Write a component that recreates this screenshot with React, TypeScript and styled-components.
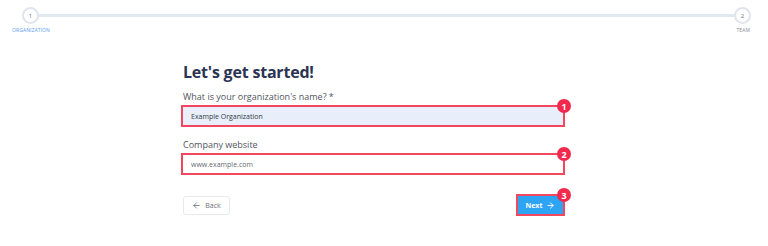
import styled, { createGlobalStyle } from "styled-components";
import { ArrowLeft, ArrowRight } from "lucide-react";

const GlobalStyle = createGlobalStyle`
    html, body {
        margin: 0;
        padding: 0;
        background: #ffffff;
    }
    * {
        box-sizing: border-box;
    }
`;

export default function App() {
    return (
        <Page>
            <GlobalStyle />
            <Stepper>
                <StepRow>
                    <Circle>1</Circle>
                    <Line />
                    <Circle>2</Circle>
                </StepRow>
                <StepLabels>
                    <StepLabel $active>ORGANIZATION</StepLabel>
                    <StepLabel>TEAM</StepLabel>
                </StepLabels>
            </Stepper>

            <Form>
                <Title>Let's get started!</Title>

                <Field>
                    <Label>What is your organization's name? *</Label>
                    <Marked>
                        <Input $filled defaultValue="Example Organization" />
                        <Badge>1</Badge>
                    </Marked>
                </Field>

                <Field>
                    <Label>Company website</Label>
                    <Marked>
                        <Input placeholder="www.example.com" />
                        <Badge>2</Badge>
                    </Marked>
                </Field>

                <Actions>
                    <BackBtn>
                        <ArrowLeft size={9} strokeWidth={2.2} /> Back
                    </BackBtn>
                    <Marked>
                        <NextBtn>
                            Next <ArrowRight size={9} strokeWidth={2.6} />
                        </NextBtn>
                        <Badge>3</Badge>
                    </Marked>
                </Actions>
            </Form>
        </Page>
    );
}

const Page = styled.div`
    width: 768px;
    height: 246px;
    font-family: "Open Sans", "Noto Sans", sans-serif;
    overflow: hidden;
`;

const Stepper = styled.div`
    padding-top: 7px;
`;

const StepRow = styled.div`
    display: flex;
    align-items: center;
    padding: 0 17px 0 22px;
`;

const Circle = styled.div`
    width: 17px;
    height: 17px;
    border-radius: 50%;
    border: 2px solid #dfe5ee;
    background: #ffffff;
    display: flex;
    align-items: center;
    justify-content: center;
    font-size: 6px;
    color: #6b7280;
    flex-shrink: 0;
`;

const Line = styled.div`
    flex: 1;
    height: 3px;
    background: #e2e8f0;
`;

const StepLabels = styled.div`
    display: flex;
    justify-content: space-between;
    padding: 0 18px 0 12px;
    margin-top: 3px;
`;

const StepLabel = styled.div<{ $active?: boolean }>`
    font-size: 5px;
    line-height: 6px;
    letter-spacing: 0.1px;
    color: ${(p) => (p.$active ? "#5b9cf2" : "#8a8f98")};
`;

const Form = styled.div`
    width: 382px;
    margin: 28px 0 0 182px;
    display: flex;
    flex-direction: column;
`;

const Title = styled.h1`
    margin: 0 0 8px 1px;
    font-size: 16px;
    line-height: 22px;
    font-weight: 700;
    letter-spacing: -0.2px;
    color: #2b3452;
`;

const Field = styled.div`
    display: flex;
    flex-direction: column;
    gap: 3px;
    margin-bottom: 13px;
`;

const Label = styled.label`
    margin-left: 1px;
    font-size: 9px;
    line-height: 12px;
    color: #50555e;
`;

const Marked = styled.div`
    position: relative;
    outline: 2px solid #f2475c;
    outline-offset: -1px;
`;

const Input = styled.input<{ $filled?: boolean }>`
    display: block;
    width: 100%;
    height: 20px;
    padding: 0 8px;
    border: 1px solid #d6dce6;
    background: ${(p) => (p.$filled ? "#e8eefa" : "#ffffff")};
    font-family: inherit;
    font-size: 7px;
    color: #333a45;
    outline: none;
    &::placeholder {
        color: #666b73;
    }
`;

const Badge = styled.div`
    position: absolute;
    top: -7px;
    right: -7px;
    width: 14px;
    height: 14px;
    border-radius: 50%;
    background: #f2294c;
    color: #ffffff;
    font-size: 9px;
    font-weight: 700;
    display: flex;
    align-items: center;
    justify-content: center;
`;

const Actions = styled.div`
    display: flex;
    justify-content: space-between;
    align-items: center;
    margin-top: 8px;
`;

const BackBtn = styled.button`
    width: 47px;
    height: 19px;
    margin-left: 1px;
    border: 1px solid #e6e9ee;
    border-radius: 3px;
    background: #ffffff;
    font-family: inherit;
    font-size: 7px;
    color: #6b7079;
    display: flex;
    align-items: center;
    justify-content: center;
    gap: 4px;
`;

const NextBtn = styled.button`
    display: flex;
    align-items: center;
    justify-content: center;
    gap: 4px;
    width: 47px;
    height: 20px;
    border: none;
    background: #2ea4f5;
    font-family: inherit;
    font-size: 7px;
    font-weight: 700;
    color: #ffffff;
`;
